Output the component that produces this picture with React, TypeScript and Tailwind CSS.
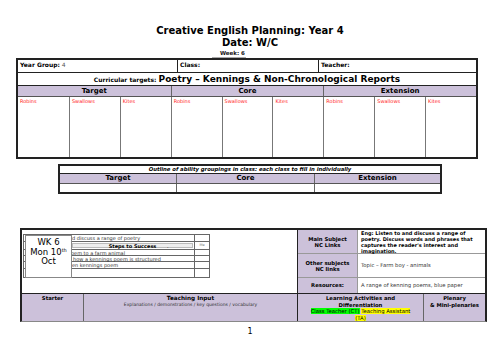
const purple = "bg-[#ccc1da]";

const groups = ["Robins", "Swallows", "Kites"];
const levels = ["Target", "Core", "Extension"];

export default function App() {
  return (
    <div className="w-[500px] h-[353px] overflow-hidden bg-white text-black font-['DejaVu_Sans',sans-serif]">
      {/* heading */}
      <div className="pt-[25px] flex flex-col items-center">
        <p className="text-[10px] font-bold leading-[12px]">Creative English Planning: Year 4</p>
        <p className="text-[10px] font-bold leading-[12px]">Date: W/C</p>
        <p className="self-start ml-[212px] pl-[8px] pr-[1px] text-[5.5px] font-bold leading-[8px] text-[#111] border-b border-[#aaa]">
          Week: 6
        </p>
      </div>

      {/* curricular targets */}
      <div className="ml-[16px] w-[462px] border-2 border-[#222]">
        <div className="flex h-[13px] border-b border-[#222] text-[6px] leading-[8px]">
          <div className="w-[159px] pl-[2px] pt-[1px]">
            <span className="font-bold">Year Group:</span> <span className="text-[#555]">4</span>
          </div>
          <div className="w-[141px] border-l border-[#222] pl-[2px] pt-[1px] font-bold">Class:</div>
          <div className="flex-1 border-l border-[#222] pl-[2px] pt-[1px] font-bold">Teacher:</div>
        </div>
        <div className="flex h-[13px] items-center justify-center border-b border-[#222] font-bold">
          <span className="text-[6px]">Curricular targets:&nbsp;</span>
          <span className="text-[9px] leading-[10px]">Poetry – Kennings &amp; Non-Chronological Reports</span>
        </div>
        <div className={`grid grid-cols-3 h-[11px] border-b border-[#555] ${purple}`}>
          {levels.map((l, i) => (
            <div
              key={l}
              className={`text-center text-[7px] font-bold leading-[10px] ${i > 0 ? "border-l border-[#666]" : ""}`}
            >
              {l}
            </div>
          ))}
        </div>
        <div className="grid grid-cols-9 h-[60px]">
          {levels.flatMap((l, i) =>
            groups.map((g, j) => (
              <div
                key={l + g}
                className={`pl-[2px] pt-[1px] text-[5px] leading-[6px] text-[#ff1a1a] ${i + j > 0 ? "border-l border-[#777]" : ""}`}
              >
                {g}
              </div>
            ))
          )}
        </div>
      </div>

      {/* ability groupings */}
      <div className="ml-[58px] mt-[5px] w-[384px] border-2 border-[#222]">
        <div className="h-[8px] border-b border-[#222] text-center text-[5.3px] font-bold italic leading-[7px]">
          Outline of ability groupings in class: each class to fill in individually
        </div>
        <div className={`flex h-[10px] border-b border-[#555] ${purple} text-[7px] font-bold leading-[9px]`}>
          <div className="w-[116px] text-center">Target</div>
          <div className="w-[138px] border-l border-[#666] text-center">Core</div>
          <div className="flex-1 border-l border-[#666] text-center">Extension</div>
        </div>
        <div className="flex h-[8px]">
          <div className="w-[116px]" />
          <div className="w-[138px] border-l border-[#666]" />
          <div className="flex-1 border-l border-[#666]" />
        </div>
      </div>

      {/* weekly plan */}
      <div className="ml-[20px] mt-[34px] w-[467px] border-t-2 border-x-2 border-b border-t-[#222] border-x-[#222] border-b-[#888]">
        <div className="flex h-[63px]">
          <div className="w-[275px] pl-[1px] pt-[4px]">
            <div className="relative w-[187px]">
              <div className="border border-[#666] text-[5px] leading-[5px] text-[#333]">
                <div className="flex h-[7px] border-b border-[#666]">
                  <div className="w-[170px] pl-[48px] pt-[1px]">d discuss a range of poetry</div>
                  <div className="flex-1 border-l border-[#666]" />
                </div>
                <div className="flex h-[8px] border-b border-[#666]">
                  <div className="w-[170px] pl-[48px] pr-[1px] py-[1px]">
                    <div className="relative h-full bg-[#eeeeee] border border-[#bbb] text-center font-bold text-black leading-[4px]">
                      Steps to Success
                      <span className="absolute left-[94px] top-0 font-normal">.</span>
                    </div>
                  </div>
                  <div className="flex-1 border-l border-[#666] text-[3.5px] leading-[7px] text-center text-[#777]">Me</div>
                </div>
                <div className="flex h-[6px] border-b border-[#666]">
                  <div className="w-[170px] pl-[47px] pt-[0.5px]">oem to a farm animal</div>
                  <div className="flex-1 border-l border-[#666]" />
                </div>
                <div className="flex h-[6px] border-b border-[#666]">
                  <div className="w-[170px] pl-[49px] pt-[0.5px]">how a kennings poem is structured</div>
                  <div className="flex-1 border-l border-[#666]" />
                </div>
                <div className="flex h-[7px] border-b border-[#666]">
                  <div className="w-[170px] pl-[48px] pt-[1px]">en kennings poem</div>
                  <div className="flex-1 border-l border-[#666]" />
                </div>
                <div className="flex h-[8px]">
                  <div className="w-[170px]" />
                  <div className="flex-1 border-l border-[#666]" />
                </div>
              </div>
              <div className="absolute left-[2px] top-[1px] w-[47px] h-[43px] bg-white border border-[#888] flex flex-col items-center pt-[2px] text-[8.5px] leading-[9.5px]">
                <span>WK 6</span>
                <span>
                  Mon 10<sup className="text-[5px]">th</sup>
                </span>
                <span>Oct</span>
              </div>
            </div>
          </div>
          <div className="flex-1 border-l border-[#222] flex flex-col text-[5.3px]">
            <div className="flex h-[24px] border-b border-[#999]">
              <div className={`w-[60px] ${purple} border-r border-[#999] flex flex-col justify-center text-center font-bold leading-[6px]`}>
                <span>Main Subject</span>
                <span>NC Links</span>
              </div>
              <div className="flex-1 pl-[3px] pt-[1px] font-bold leading-[5.9px] text-[5px] whitespace-nowrap">
                Eng: Listen to and discuss a range of
                <br />
                poetry. Discuss words and phrases that
                <br />
                captures the reader's interest and
                <br />
                imagination.
              </div>
            </div>
            <div className="flex h-[24px] border-b border-[#999]">
              <div className={`w-[60px] ${purple} border-r border-[#999] flex flex-col justify-center text-center font-bold leading-[6px]`}>
                <span>Other subjects</span>
                <span>NC links</span>
              </div>
              <div className="flex-1 pl-[3px] flex items-center text-[#333]">Topic – Farm boy - animals</div>
            </div>
            <div className="flex flex-1">
              <div className={`w-[60px] ${purple} border-r border-[#999] flex items-center justify-center font-bold`}>
                Resources:
              </div>
              <div className="flex-1 pl-[3px] flex items-center text-[#333]">A range of kenning poems, blue paper</div>
            </div>
          </div>
        </div>
        <div className={`flex h-[28px] border-t border-[#222] ${purple} text-[5.3px] leading-[6.5px]`}>
          <div className="w-[61px] text-center font-bold pt-[1px]">Starter</div>
          <div className="w-[214px] border-l border-[#666] text-center pt-[1px]">
            <p className="font-bold text-[5.7px]">Teaching Input</p>
            <p className="text-[4.5px] leading-[5px] text-[#333]">Explanations / demonstrations / key questions / vocabulary</p>
          </div>
          <div className="w-[126px] border-l border-[#222] text-center pt-[1px]">
            <p className="font-bold">Learning Activities and</p>
            <p className="font-bold">Differentiation</p>
            <p>
              <span className="bg-[#00ff00]">Class Teacher (CT)</span> <span className="bg-[#ffff00]">Teaching Assistant</span>
            </p>
            <p>
              <span className="bg-[#ffff00]">(TA)</span>
            </p>
          </div>
          <div className="flex-1 border-l border-[#666] text-center font-bold pt-[1px]">
            <p>Plenary</p>
            <p>&amp; Mini-plenaries</p>
          </div>
        </div>
      </div>

      <p className="mt-[5px] text-center text-[8px] leading-[10px]">1</p>
    </div>
  );
}
